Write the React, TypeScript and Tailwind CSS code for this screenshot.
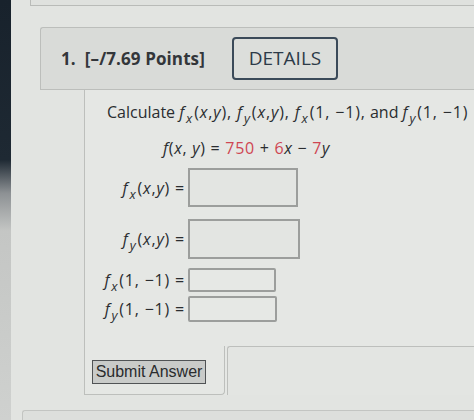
import React from "react";

const F = ({ s }: { s: string }) => (
  <span>
    <i className="mr-[1px]">f</i>
    <i className="relative top-[5px] text-[13px] leading-none mr-[1px]">{s}</i>
  </span>
);

const Label = ({ s, args }: { s: string; args: React.ReactNode }) => (
  <span className="whitespace-nowrap tracking-[0.8px]">
    <F s={s} />
    {args} =
  </span>
);

export default function App() {
  return (
    <div
      className="w-[474px] h-[420px] overflow-hidden flex bg-[#e2e4e1] text-[#2a2d30]"
      style={{ fontFamily: '"Open Sans", "Noto Sans", sans-serif' }}
    >
      <div className="w-[11px] shrink-0 bg-[linear-gradient(180deg,#18222c_0%,#1e2933_38%,#8d9194_46%,#c4c6c4_55%,#cfd1cf_100%)]" />
      <div className="flex-1 flex flex-col min-w-0">
        <div className="ml-[19px] h-[6px] border-b border-l border-[#b9bbb8] bg-[#dfe1de]" />
        <div className="ml-[29px] mt-[21px] h-[63px] flex items-center pl-[20px] bg-[#d9dbd8] border-t border-l border-b border-[#bcbebb] rounded-tl-[3px]">
          <span className="w-[171px] text-[17px] font-bold tracking-[0.1px] text-[#33363a] whitespace-nowrap">
            1.&nbsp; [–/7.69 Points]
          </span>
          <div className="w-[106px] h-[43px] flex items-center justify-center border-2 border-[#3b4a59] rounded-[4px] text-[19px] text-[#2c3a48] bg-[#dcdedb]">
            DETAILS
          </div>
        </div>
        <div className="ml-[73px] flex flex-col border-l border-[#bdbfbc] bg-[#e5e7e4]">
          <div className="pl-[22px] pt-[11px] text-[16px] leading-[22px] whitespace-nowrap">
            Calculate{" "}
            <span className="tracking-[0.85px]">
              <F s="x" />(<i>x</i>,<i>y</i>), <F s="y" />(<i>x</i>,<i>y</i>), <F s="x" />(1, −1),
            </span>{" "}
            and{" "}
            <span className="tracking-[0.85px]">
              <F s="y" />(1, −1)
            </span>
          </div>
          <div className="pl-[78px] mt-[14px] text-[16px] leading-[22px] whitespace-nowrap tracking-[0.7px]">
            <i>f</i>(<i>x</i>, <i>y</i>) = <span className="text-[#cf4652]">750</span> + <span className="text-[#cf4652]">6</span><i>x</i> − <span className="text-[#cf4652]">7</span><i>y</i>
          </div>
          <div className="mt-[9px] grid grid-cols-[97px_auto] gap-x-[3px] items-center text-[16px] leading-[22px] pl-[3px] justify-start">
            <div className="text-right"><Label s="x" args={<>(<i>x</i>,<i>y</i>)</>} /></div>
            <div className="w-[110px] h-[39px] border-2 border-[#9c9e9c] bg-[#e3e5e2]" />
            <div className="text-right mt-[12px]"><Label s="y" args={<>(<i>x</i>,<i>y</i>)</>} /></div>
            <div className="mt-[12px] w-[112px] h-[40px] border-2 border-[#9c9e9c] bg-[#e3e5e2]" />
            <div className="text-right mt-[9px]">
              <span className="tracking-[1.3px]"><Label s="x" args={<>(1, −1)</>} /></span>
            </div>
            <div className="mt-[9px] w-[88px] h-[24px] border-2 border-[#9c9e9c] rounded-[2px] bg-[#e6e8e5]" />
            <div className="text-right mt-[4px]">
              <span className="tracking-[1.3px]"><Label s="y" args={<>(1, −1)</>} /></span>
            </div>
            <div className="mt-[4px] w-[89px] h-[26px] border-2 border-[#9c9e9c] rounded-[2px] bg-[#e6e8e5]" />
          </div>
          <div className="flex mt-[24px]">
            <div className="w-[140px] shrink-0 pt-[14px] pb-[10px] pl-[7px] border-b border-r border-[#bdbfbc] rounded-br-[4px]">
              <div
                className="w-[114px] h-[24px] flex items-center justify-center border-[1.5px] border-[#505355] bg-[#c9cbc9] text-[16px] text-[#2a2c2e]"
                style={{ fontFamily: '"Liberation Sans", Arial, sans-serif' }}
              >
                Submit Answer
              </div>
            </div>
            <div className="flex-1 ml-[2px] border-t border-l border-[#bdbfbc] rounded-tl-[3px] bg-[#e3e5e2]" />
          </div>
        </div>
        <div className="ml-[11px] mt-[15px] flex-1 border-t border-l border-[#c3c5c2] rounded-tl-[3px] bg-[#dddfdc]" />
      </div>
    </div>
  );
}
